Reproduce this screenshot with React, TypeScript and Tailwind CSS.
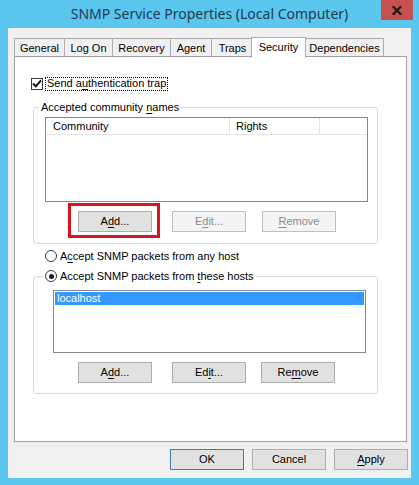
import React from "react";

function U({ children }: { children: React.ReactNode }) {
  return <span className="underline underline-offset-[2px] decoration-[1px]">{children}</span>;
}

function Btn({
  children,
  disabled,
  isDefault,
  className = "",
}: {
  children: React.ReactNode;
  disabled?: boolean;
  isDefault?: boolean;
  className?: string;
}) {
  const base = "w-[74px] h-[21px] flex items-center justify-center border leading-none ";
  const look = disabled
    ? "bg-[#f4f4f4] border-[#bfbfbf] text-[#8a8a8a]"
    : isDefault
    ? "bg-[#e1e1e1] border-[#3c7fb1] text-black"
    : "bg-[#e1e1e1] border-[#adadad] text-black";
  return <div className={base + look + " " + className}>{children}</div>;
}

function Radio({ checked }: { checked?: boolean }) {
  return (
    <div className="w-[12px] h-[12px] rounded-full border border-[#3a3a3a] bg-white flex items-center justify-center shrink-0">
      {checked && <div className="w-[5px] h-[5px] rounded-full bg-[#1a1a1a]" />}
    </div>
  );
}

export default function App() {
  const tabs: { label: string; w: string; ml: string }[] = [
    { label: "General", w: "w-[51px]", ml: "ml-0" },
    { label: "Log On", w: "w-[49px]", ml: "-ml-px" },
    { label: "Recovery", w: "w-[59px]", ml: "-ml-px" },
    { label: "Agent", w: "w-[42px]", ml: "-ml-px" },
    { label: "Traps", w: "w-[43px]", ml: "-ml-px" },
  ];
  return (
    <div className="w-[419px] h-[485px] bg-[#5bc6ee] flex flex-col font-['Liberation_Sans',Arial,sans-serif] text-[11px] text-black overflow-hidden">
      {/* Title bar */}
      <div className="h-[28px] relative flex justify-center pt-[5px]">
        <div className="font-['Noto_Sans','Liberation_Sans',sans-serif] text-[14px] leading-[18px] text-[#1e3a52]">
          SNMP Service Properties (Local Computer)
        </div>
        <div className="absolute right-[6px] top-0 w-[32px] h-[20px] bg-[#c75050] flex items-center justify-center">
          <svg width="10" height="9" viewBox="0 0 10 9">
            <path d="M1.5 1 L8.5 8 M8.5 1 L1.5 8" stroke="#1a1a1a" strokeWidth="2.2" strokeLinecap="square" />
          </svg>
        </div>
      </div>

      {/* Client */}
      <div className="mx-[8px] mb-[7px] flex-1 bg-[#f0f0f0] flex flex-col pl-[6px]">
        {/* Tabs */}
        <div className="flex items-end pt-[8px] h-[29px]">
          {tabs.map((t) => (
            <div
              key={t.label}
              className={`${t.w} ${t.ml} h-[19px] border border-b-0 border-[#acacac] bg-[#f0f0f0] flex items-center justify-center leading-none pt-px`}
            >
              {t.label}
            </div>
          ))}
          <div className="-ml-[3px] -mr-px w-[55px] h-[21px] border border-b-0 border-[#acacac] bg-white flex items-center justify-center relative z-10 -mb-px leading-none pb-[2px]">
            Security
          </div>
          <div className="w-[79px] h-[19px] border border-b-0 border-[#acacac] bg-[#f0f0f0] flex items-center justify-center leading-none pt-px">
            Dependencies
          </div>
        </div>

        {/* Panel */}
        <div className="w-[393px] h-[386px] -mt-px border border-[#a0a0a0] bg-white flex flex-col">
          {/* Checkbox row */}
          <div className="mt-[20px] ml-[16px] flex items-center h-[13px]">
            <div className="w-[12px] h-[12px] border border-[#3a3a3a] bg-white flex items-center justify-center shrink-0">
              <svg width="10" height="9" viewBox="0 0 10 9">
                <path d="M1 4.5 L3.8 7.3 L9 1.3" stroke="#111" strokeWidth="2" fill="none" />
              </svg>
            </div>
            <div className="ml-[2px] border border-dotted border-black px-px h-[14px] flex items-center leading-none">
              Send a<U>u</U>thentication trap
            </div>
          </div>

          {/* Group 1 */}
          <fieldset className="mt-[10px] ml-[18px] w-[345px] border border-[#d9d9d9] rounded-[3px] p-0 pb-[11px]">
            <legend className="ml-[5px] px-[2px] leading-[14px]">
              Accepted community <U>n</U>ames
            </legend>
            <div className="mt-[3px] ml-[11px] w-[323px] h-[85px] border border-[#828790] bg-white flex flex-col">
              <div className="h-[17px] flex border-b border-[#e5e5e5]">
                <div className="w-[184px] border-r border-[#e5e5e5] pl-[7px] flex items-center leading-none">Community</div>
                <div className="w-[90px] border-r border-[#e5e5e5] pl-[6px] flex items-center leading-none">Rights</div>
              </div>
            </div>
            <div className="mt-[9px] pl-[34px] flex items-start">
              <div className="-my-[8px] -mr-[8px] border-[3px] border-[#d9141c] pl-[7px] pr-[5px] pt-[5px] pb-[3px]">
                <Btn>
                  A<U>d</U>d...
                </Btn>
              </div>
              <Btn disabled className="ml-[20px]">
                E<U>d</U>it...
              </Btn>
              <Btn disabled className="ml-[16px]">
                <U>R</U>emove
              </Btn>
            </div>
          </fieldset>

          {/* Radio 1 */}
          <div className="mt-[5px] ml-[30px] h-[14px] flex items-center">
            <Radio />
            <span className="ml-[3px] leading-none">
              A<U>c</U>cept SNMP packets from any host
            </span>
          </div>

          {/* Group 2 */}
          <fieldset className="mt-[6px] ml-[18px] w-[345px] border border-[#d9d9d9] rounded-[3px] p-0 pb-[10px]">
            <legend className="ml-[9px] px-[2px] leading-[14px] h-[14px]">
              <span className="flex items-center h-[14px]">
                <Radio checked />
                <span className="ml-[3px] leading-none">
                  Accept SNMP packets from <U>t</U>hese hosts
                </span>
              </span>
            </legend>
            <div className="mt-[7px] ml-[19px] w-[313px] h-[63px] border border-[#828790] bg-white p-px">
              <div className="h-[13px] bg-[#3399ff] text-white pl-[2px] flex items-center leading-none">localhost</div>
            </div>
            <div className="mt-[9px] pl-[44px] flex items-start">
              <Btn>
                A<U>d</U>d...
              </Btn>
              <Btn className="ml-[20px]">
                Ed<U>i</U>t...
              </Btn>
              <Btn className="ml-[15px]">
                Re<U>m</U>ove
              </Btn>
            </div>
          </fieldset>
        </div>

        {/* Bottom buttons */}
        <div className="mt-[7px] flex pl-[156px]">
          <Btn isDefault className="w-[73px]">OK</Btn>
          <Btn className="ml-[8px] w-[73px]">Cancel</Btn>
          <Btn className="ml-[8px] w-[74px]">
            <U>A</U>pply
          </Btn>
        </div>
      </div>
    </div>
  );
}
